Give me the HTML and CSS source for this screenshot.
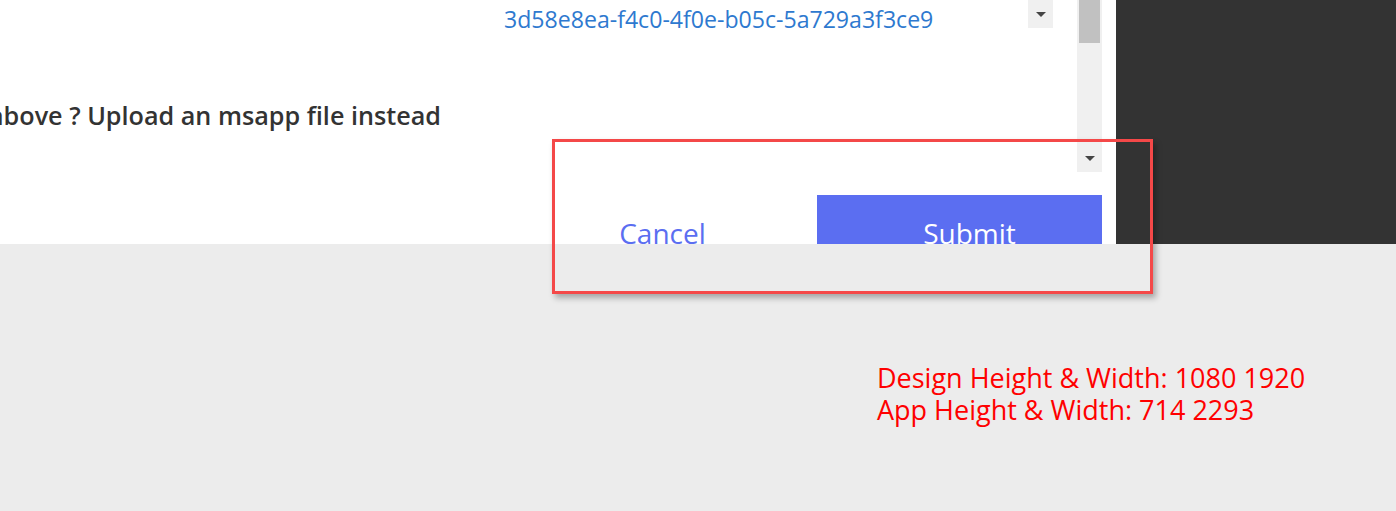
FILE: index.html
```html
<!DOCTYPE html>
<html>
<head>
<meta charset="utf-8">
<link rel="stylesheet" href="styles.css">
</head>
<body>
<div class="top">
  <div class="panel">
    <div class="upper">
      <div class="upper-main">
        <div class="idrow">
          <span class="idtext">3d58e8ea-f4c0-4f0e-b05c-5a729a3f3ce9</span>
          <span class="ddbtn"><span class="tri"></span></span>
        </div>
        <div class="labelrow">
          <span class="label">Can't find your app above ? Upload an msapp file instead</span>
        </div>
      </div>
      <div class="scrollbar">
        <div class="thumb"></div>
        <div class="sb-fill"></div>
        <div class="sb-arrow"><span class="tri"></span></div>
      </div>
    </div>
    <div class="buttons">
      <div class="btn cancel">Cancel</div>
      <div class="btn submit">Submit</div>
    </div>
  </div>
  <div class="dark"></div>
</div>
<div class="bottom">
  <div class="info">
    <div>Design Height &amp; Width: 1080 1920</div>
    <div>App Height &amp; Width: 714 2293</div>
  </div>
</div>
<div class="highlight"></div>
</body>
</html>
```

FILE: styles.css
```css
html, body {
  margin: 0;
  padding: 0;
  width: 1396px;
  height: 511px;
  overflow: hidden;
  background: #ececec;
  font-family: "Open Sans", "Noto Sans", sans-serif;
}
.top {
  display: flex;
  height: 244px;
}
.panel {
  width: 1116px;
  height: 244px;
  background: #fff;
  display: flex;
  flex-direction: column;
  padding-right: 14px;
  box-sizing: border-box;
  overflow: hidden;
}
.dark {
  flex: 1;
  background: #333333;
}
.upper {
  display: flex;
  height: 172px;
  flex-shrink: 0;
}
.upper-main {
  flex: 1;
  display: flex;
  flex-direction: column;
  min-width: 0;
}
.idrow {
  display: flex;
  justify-content: space-between;
  align-items: flex-start;
  height: 28px;
  padding-left: 504px;
  padding-right: 24px;
}
.idtext {
  color: #2e79cf;
  font-size: 23.1px;
  line-height: 30px;
  margin-top: 4px;
  white-space: nowrap;
}
.ddbtn {
  width: 25px;
  height: 28px;
  background: #f0f0f0;
  display: flex;
  justify-content: center;
  padding-top: 12px;
  box-sizing: border-box;
}
.tri {
  width: 0;
  height: 0;
  border-left: 5px solid transparent;
  border-right: 5px solid transparent;
  border-top: 5px solid #444;
}
.labelrow {
  display: flex;
  justify-content: flex-end;
  width: 441px;
  margin-top: 70px;
  overflow: hidden;
}
.label {
  flex-shrink: 0;
  white-space: nowrap;
  font-size: 25.2px;
  font-weight: 600;
  color: #333;
  line-height: 34px;
}
.scrollbar {
  width: 25px;
  background: #f0f0f0;
  display: flex;
  flex-direction: column;
}
.thumb {
  height: 43px;
  margin: 0 2px;
  background: #c1c1c1;
}
.sb-fill {
  flex: 1;
}
.sb-arrow {
  height: 22px;
  display: flex;
  justify-content: center;
  padding-top: 6px;
  box-sizing: border-box;
}
.buttons {
  display: flex;
  gap: 12px;
  margin-top: 23px;
  padding-left: 520px;
}
.btn {
  width: 285px;
  height: 76px;
  flex-shrink: 0;
  display: flex;
  align-items: center;
  justify-content: center;
  font-size: 28px;
  box-sizing: border-box;
}
.cancel {
  color: #5b6ef1;
}
.submit {
  background: #5b6ef1;
  color: #fff;
  padding-left: 20px;
}
.bottom {
  padding-left: 877px;
  padding-top: 118px;
}
.info {
  color: #ff0000;
  font-size: 27px;
  line-height: 32px;
}
.highlight {
  position: absolute;
  left: 552px;
  top: 139px;
  width: 595px;
  height: 149px;
  border: 3px solid #f44848;
  box-shadow: 3px 4px 6px rgba(0, 0, 0, 0.3);
}
```
